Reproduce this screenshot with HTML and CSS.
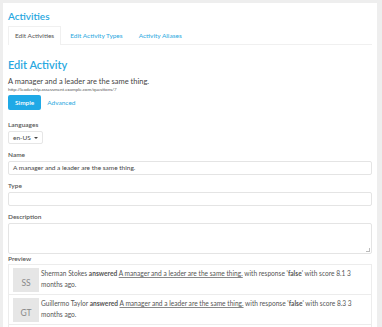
FILE: index.html
```html
<!DOCTYPE html>
<html>
<head>
    <title>Activities</title>
    <link rel="stylesheet" href="styles.css">
</head>
<body>
<div class="panel">
    <h2 class="page-title">Activities</h2>
    <div class="tabs">
        <a class="tab active" href="#">Edit Activities</a>
        <a class="tab" href="#">Edit Activity Types</a>
        <a class="tab" href="#">Activity Aliases</a>
    </div>

    <h3 class="section-title">Edit Activity</h3>
    <p class="lead">A manager and a leader are the same thing.</p>
    <p class="url">http://leadership.assessment.example.com/questions/7</p>

    <div class="modes">
        <button class="mode on">Simple</button>
        <a class="mode-link" href="#">Advanced</a>
    </div>

    <label class="field-label first">Languages</label>
    <div class="lang">en-US <span class="caret"></span></div>

    <label class="field-label">Name</label>
    <div class="input">A manager and a leader are the same thing.</div>

    <label class="field-label">Type</label>
    <div class="input"></div>

    <label class="field-label">Description</label>
    <div class="textarea"><span class="grip"></span></div>

    <label class="field-label preview-label">Preview</label>
    <div class="feed">
        <div class="feed-item">
            <div class="avatar">SS</div>
            <div class="feed-text">Sherman Stokes <b>answered</b> <u>A manager and a leader are the same thing.</u> with response '<b>false</b>' with score 8.1 3 months ago.</div>
        </div>
        <div class="feed-item">
            <div class="avatar">GT</div>
            <div class="feed-text">Guillermo Taylor <b>answered</b> <u>A manager and a leader are the same thing.</u> with response '<b>false</b>' with score 8.3 3 months ago.</div>
        </div>
        <div class="feed-item">
            <div class="avatar"></div>
        </div>
    </div>
</div>
</body>
</html>
```

FILE: styles.css
```css
body {
    margin: 0;
    background-color: #eeeeee;
    font-family: Lato, "Noto Sans", sans-serif;
    color: #444;
    overflow: hidden;
    height: 327px;
}

.panel {
    background-color: #fff;
    margin: 3px 5px 0 3px;
    padding: 6px 5px 0 5px;
    height: 400px;
}

.page-title {
    margin: 0;
    font-size: 10px;
    font-weight: 600;
    color: #29a8e0;
    height: 16px;
    line-height: 14px;
}

.tabs {
    display: flex;
    border-bottom: 1px solid #f0f0f0;
    margin-top: 1px;
    height: 18px;
}

.tab {
    font-size: 6.5px;
    color: #29a8e0;
    text-decoration: none;
    padding: 0 6px;
    line-height: 18px;
    border: 1px solid transparent;
    border-bottom: none;
    margin-right: 2px;
}

.tab.active {
    color: #555;
    border-color: #f0f0f0;
    background: #fff;
    height: 18px;
    margin-bottom: -1px;
}

.section-title {
    margin: 13px 0 0 0;
    font-size: 11px;
    font-weight: 600;
    color: #29a8e0;
    line-height: 14px;
}

.lead {
    margin: 5px 0 0 0;
    font-size: 7.5px;
    line-height: 10px;
    color: #444;
}

.url {
    margin: 0;
    font-size: 4.5px;
    line-height: 6px;
    color: #555;
}

.modes {
    display: flex;
    align-items: center;
    margin-top: 2px;
    height: 15px;
}

.mode {
    background-color: #1fa9e6;
    color: #fff;
    border: none;
    border-radius: 2px;
    font: 600 6.5px Lato, "Noto Sans", sans-serif;
    height: 15px;
    padding: 0 7px;
}

.mode-link {
    color: #29a8e0;
    font-size: 6.5px;
    text-decoration: none;
    margin-left: 6px;
}

.field-label {
    display: block;
    font-size: 6.5px;
    font-weight: 600;
    color: #555;
    margin-top: 6px;
    line-height: 9px;
    height: 9px;
}

.field-label.first {
    margin-top: 10px;
}

.lang {
    display: flex;
    width: fit-content;
    align-items: center;
    border: 1px solid #e6e6e6;
    border-radius: 2px;
    height: 11px;
    padding: 0 4px;
    font-size: 6.5px;
    margin-top: 2px;
}

.caret {
    width: 0;
    height: 0;
    border-left: 2px solid transparent;
    border-right: 2px solid transparent;
    border-top: 2.5px solid #444;
    margin-left: 3px;
}

.input {
    border: 1px solid #e4e4e4;
    border-radius: 2px;
    height: 12px;
    line-height: 12px;
    padding: 0 4px;
    font-size: 6.5px;
    color: #444;
    margin-top: 2px;
}

.textarea {
    position: relative;
    border: 1px solid #e4e4e4;
    border-radius: 2px;
    height: 29px;
    margin-top: 2px;
}

.grip {
    position: absolute;
    right: 1px;
    bottom: 1px;
    width: 3px;
    height: 3px;
    border-right: 1px solid #bbb;
    border-bottom: 1px solid #bbb;
}

.preview-label {
    margin-top: 0;
    height: 9px;
}

.feed {
    border: 1px solid #ececec;
    border-bottom: none;
    margin-top: 1px;
}

.feed-item {
    display: flex;
    padding: 3px 4px 2px 4px;
    border-bottom: 1px solid #ececec;
    height: 24px;
}

.avatar {
    width: 26px;
    height: 24px;
    background-color: #e6e6e6;
    color: #888;
    font-size: 8.5px;
    display: flex;
    align-items: center;
    justify-content: center;
    padding-top: 6px;
    box-sizing: border-box;
    flex-shrink: 0;
}

.feed-text {
    font-size: 6.6px;
    line-height: 11px;
    margin-left: 2px;
    padding-right: 10px;
    color: #555;
}

.feed-text b {
    font-weight: 700;
}

.feed-text u {
    text-decoration-color: #888;
}
```
